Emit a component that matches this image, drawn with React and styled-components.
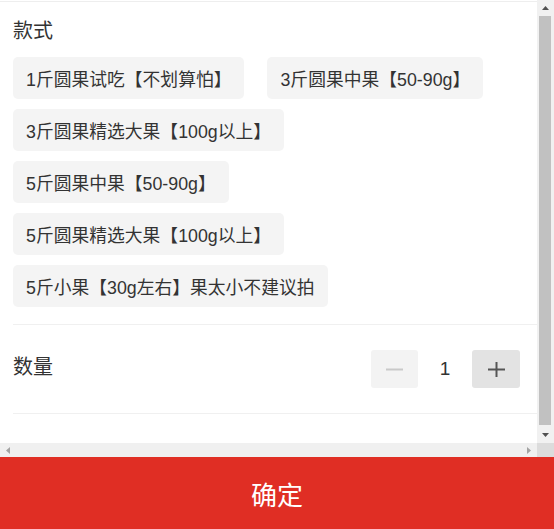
import React, { useState } from 'react';
import styled, { createGlobalStyle } from 'styled-components';

const Global = createGlobalStyle`
  html, body { margin: 0; padding: 0; height: 100%; background: #fff; }
  #root { height: 100%; }
  body {
    font-family: "Liberation Sans", "Noto Sans CJK SC", sans-serif;
    color: #333;
  }
`;

const Page = styled.div`
  height: 100vh;
  display: flex;
  flex-direction: column;
`;

const Frame = styled.div`
  flex: 1;
  min-height: 0;
  display: grid;
  grid-template-columns: 1fr 17px;
  grid-template-rows: 1fr 14px;
`;

const Content = styled.div`
  min-width: 0;
  min-height: 0;
  overflow: auto;
  scrollbar-width: none;
  &::-webkit-scrollbar { display: none; }
`;

const VBar = styled.div`
  background: #f1f1f1;
  display: flex;
  flex-direction: column;
`;

const HBar = styled.div`
  background: #f0f0f0;
  display: flex;
`;

const Corner = styled.div`
  background: #dcdcdc;
`;

const BarButton = styled.div`
  flex: none;
  width: ${p => (p.$horizontal ? '16px' : 'auto')};
  height: ${p => (p.$horizontal ? 'auto' : '16px')};
  display: flex;
  align-items: center;
  justify-content: center;
  color: ${p => (p.$off ? '#a3a3a3' : '#505050')};
`;

const Track = styled.div`
  flex: 1;
  display: flex;
  flex-direction: column;
`;

const Thumb = styled.div`
  flex: 1;
  margin: 0 3px 2px 2px;
  background: #c1c1c1;
`;

const Sheet = styled.div`
  padding: 1px 0 32px;
`;

const Section = styled.section`
  border-top: 1px solid #eeeeee;
  padding: 15px 0 7px 13px;
`;

const Title = styled.div`
  font-size: 20px;
  line-height: 28px;
  color: #333;
`;

const TagList = styled.div`
  display: flex;
  flex-wrap: wrap;
  margin-top: 12px;
`;

const Tag = styled.button`
  all: unset;
  box-sizing: border-box;
  height: 42px;
  display: inline-flex;
  align-items: center;
  padding: 0 13px;
  margin: 0 23px 10px 0;
  border-radius: 5px;
  background: ${p => (p.$active ? '#fde9e8' : '#f4f4f4')};
  color: ${p => (p.$active ? '#e02e24' : '#333')};
  font-family: "Liberation Sans", "Noto Sans CJK SC", sans-serif;
  font-size: 17.8px;
  white-space: nowrap;
  cursor: pointer;
`;

const QtyRow = styled.div`
  margin-left: 13px;
  border-top: 1px solid #f0f0f0;
  border-bottom: 1px solid #f0f0f0;
  height: 88px;
  padding-right: 17px;
  display: flex;
  align-items: center;
  justify-content: space-between;
`;

const Label = styled.div`
  font-size: 20px;
  line-height: 28px;
  margin-top: -4px;
`;

const Stepper = styled.div`
  display: flex;
  align-items: center;
`;

const StepBtn = styled.button`
  all: unset;
  width: ${p => p.$w}px;
  height: 38px;
  border-radius: 3px;
  background: ${p => (p.$disabled ? '#f3f3f3' : '#e3e3e3')};
  color: ${p => (p.$disabled ? '#c9c9c9' : '#555')};
  display: flex;
  align-items: center;
  justify-content: center;
  cursor: pointer;
`;

const Count = styled.div`
  width: 54px;
  text-align: center;
  font-size: 19px;
  color: #333;
`;

const Confirm = styled.button`
  all: unset;
  flex: none;
  height: 72px;
  background: #e02e24;
  color: #fff;
  font-family: "Liberation Sans", "Noto Sans CJK SC", sans-serif;
  font-size: 26px;
  display: flex;
  align-items: center;
  justify-content: center;
  cursor: pointer;
`;

const options = [
  '1斤圆果试吃【不划算怕】',
  '3斤圆果中果【50-90g】',
  '3斤圆果精选大果【100g以上】',
  '5斤圆果中果【50-90g】',
  '5斤圆果精选大果【100g以上】',
  '5斤小果【30g左右】果太小不建议拍',
];

const MinusIcon = () => (
  <svg width="17" height="17" viewBox="0 0 17 17">
    <line x1="0" y1="8.5" x2="17" y2="8.5" stroke="currentColor" strokeWidth="2" />
  </svg>
);

const PlusIcon = () => (
  <svg width="17" height="17" viewBox="0 0 17 17">
    <line x1="0" y1="8.5" x2="17" y2="8.5" stroke="currentColor" strokeWidth="2" />
    <line x1="8.5" y1="1" x2="8.5" y2="16" stroke="currentColor" strokeWidth="2" />
  </svg>
);

const arrowPoints = {
  up: '0,4 7,4 3.5,0',
  down: '0,0 7,0 3.5,4',
  left: '4,0 4,7 0,3.5',
  right: '0,0 0,7 4,3.5',
};

const Arrow = ({ dir }) => {
  const horiz = dir === 'left' || dir === 'right';
  return (
    <svg width={horiz ? 4 : 7} height={horiz ? 7 : 4} viewBox={horiz ? '0 0 4 7' : '0 0 7 4'}>
      <polygon points={arrowPoints[dir]} fill="currentColor" />
    </svg>
  );
};

export default function App() {
  const [selected, setSelected] = useState(-1);
  const [count, setCount] = useState(1);

  return (
    <Page>
      <Global />
      <Frame>
        <Content>
          <Sheet>
            <Section>
              <Title>款式</Title>
              <TagList>
                {options.map((o, i) => (
                  <Tag key={o} $active={selected === i} onClick={() => setSelected(i)}>
                    {o}
                  </Tag>
                ))}
              </TagList>
            </Section>
            <QtyRow>
              <Label>数量</Label>
              <Stepper>
                <StepBtn $w={47} $disabled={count <= 1} onClick={() => setCount(c => Math.max(1, c - 1))}>
                  <MinusIcon />
                </StepBtn>
                <Count>{count}</Count>
                <StepBtn $w={48} onClick={() => setCount(c => c + 1)}>
                  <PlusIcon />
                </StepBtn>
              </Stepper>
            </QtyRow>
          </Sheet>
        </Content>
        <VBar>
          <BarButton><Arrow dir="up" /></BarButton>
          <Track><Thumb /></Track>
          <BarButton><Arrow dir="down" /></BarButton>
        </VBar>
        <HBar>
          <BarButton $horizontal $off><Arrow dir="left" /></BarButton>
          <Track />
          <BarButton $horizontal $off><Arrow dir="right" /></BarButton>
        </HBar>
        <Corner />
      </Frame>
      <Confirm>确定</Confirm>
    </Page>
  );
}
